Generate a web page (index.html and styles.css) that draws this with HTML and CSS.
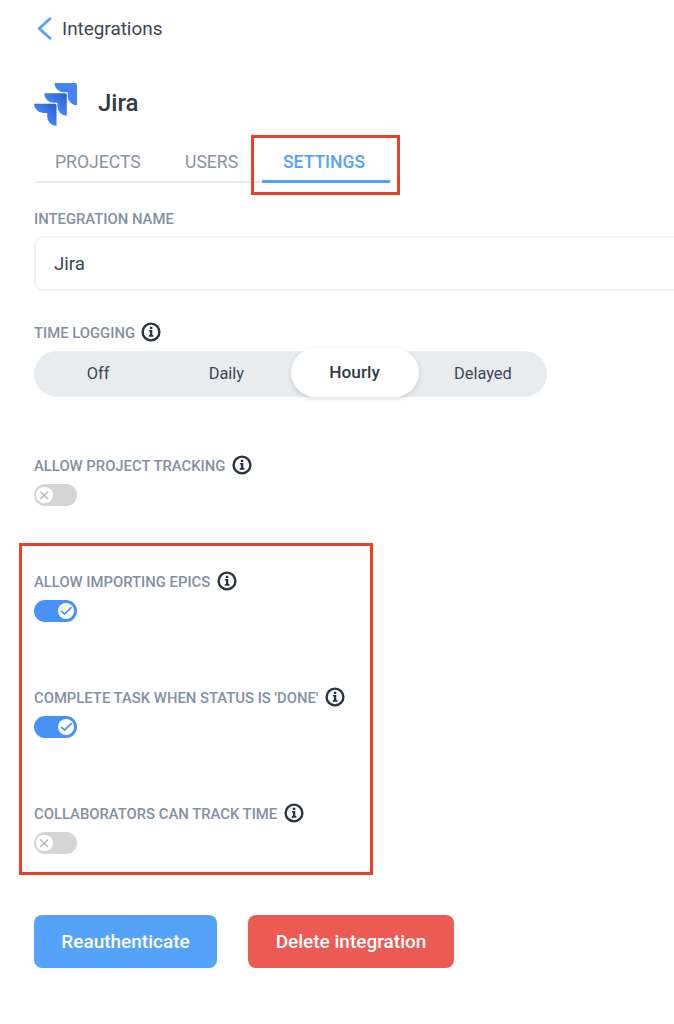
FILE: index.html
```html
<!DOCTYPE html>
<html lang="en">
<head>
<meta charset="utf-8">
<title>Jira integration settings</title>
<link rel="stylesheet" href="styles.css">
</head>
<body>
<svg class="defs" aria-hidden="true">
  <symbol id="info" viewBox="0 0 20 20">
    <circle cx="10" cy="10" r="8.4" fill="none" stroke="#2b333f" stroke-width="2.4"/>
    <path d="M8.8 4.8h2.5v2.1H8.8zM7.9 8.1h3.4v5h1.1v1.6H7.8v-1.6h1.1V9.6h-1z" fill="#2b333f"/>
  </symbol>
</svg>
<main class="page">
  <a class="back">
    <svg class="chevron" viewBox="0 0 15 24"><path d="M13 1.7 2.2 11.5 13 21.3" fill="none" stroke="#54a3f8" stroke-width="2.8" stroke-linecap="round" stroke-linejoin="round"/></svg>
    <span class="back-text">Integrations</span>
  </a>
  <header class="heading">
    <svg class="logo" viewBox="0 0 24 24">
      <defs>
        <linearGradient id="g1" x1="0.95" y1="0.05" x2="0.45" y2="0.6"><stop offset="0.1" stop-color="#2d62d2"/><stop offset="1" stop-color="#4284fb"/></linearGradient>
      </defs>
      <path fill="#4284fb" d="M23.013 0H11.455a5.215 5.215 0 0 0 5.215 5.215h2.129v2.057A5.215 5.215 0 0 0 24 12.483V1.005A1.001 1.001 0 0 0 23.013 0z"/>
      <path fill="url(#g1)" d="M17.294 5.757H5.736a5.215 5.215 0 0 0 5.215 5.214h2.129v2.058a5.218 5.218 0 0 0 5.215 5.214V6.758a1.001 1.001 0 0 0-1.001-1.001z"/>
      <path fill="url(#g1)" d="M11.571 11.513H0a5.218 5.218 0 0 0 5.232 5.215h2.13v2.057A5.215 5.215 0 0 0 12.575 24V12.518a1.005 1.005 0 0 0-1.004-1.005z"/>
    </svg>
    <h1 class="title">Jira</h1>
  </header>
  <nav class="tabs">
    <a class="tab projects">PROJECTS</a>
    <a class="tab users">USERS</a>
    <a class="tab active">SETTINGS</a>
    <span class="mark mark-tab"></span>
  </nav>
  <section class="name">
    <div class="label"><span>INTEGRATION NAME</span></div>
    <div class="input"><span>Jira</span></div>
  </section>
  <section class="logging">
    <div class="label"><span>TIME LOGGING</span><svg class="info"><use href="#info"/></svg></div>
    <div class="segments">
      <span class="segment">Off</span>
      <span class="segment">Daily</span>
      <span class="segment selected">Hourly</span>
      <span class="segment">Delayed</span>
    </div>
  </section>
  <section class="option">
    <div class="label"><span>ALLOW PROJECT TRACKING</span><svg class="info"><use href="#info"/></svg></div>
    <div class="toggle"><span class="knob"><svg viewBox="0 0 16 16"><path d="m4.3 4.3 7.4 7.4m0-7.4-7.4 7.4" stroke="#b4b6ba" stroke-width="1.4" fill="none"/></svg></span></div>
  </section>
  <div class="group">
    <span class="mark mark-group"></span>
    <section class="option">
      <div class="label"><span>ALLOW IMPORTING EPICS</span><svg class="info"><use href="#info"/></svg></div>
      <div class="toggle on"><span class="knob"><svg viewBox="0 0 16 16"><path d="m3 7.6 3.4 3.2L13.2 4" stroke="#4891f7" stroke-width="1.6" fill="none"/></svg></span></div>
    </section>
    <section class="option">
      <div class="label"><span>COMPLETE TASK WHEN STATUS IS 'DONE'</span><svg class="info"><use href="#info"/></svg></div>
      <div class="toggle on"><span class="knob"><svg viewBox="0 0 16 16"><path d="m3 7.6 3.4 3.2L13.2 4" stroke="#4891f7" stroke-width="1.6" fill="none"/></svg></span></div>
    </section>
    <section class="option">
      <div class="label"><span>COLLABORATORS CAN TRACK TIME</span><svg class="info"><use href="#info"/></svg></div>
      <div class="toggle"><span class="knob"><svg viewBox="0 0 16 16"><path d="m4.3 4.3 7.4 7.4m0-7.4-7.4 7.4" stroke="#b4b6ba" stroke-width="1.4" fill="none"/></svg></span></div>
    </section>
  </div>
  <footer class="actions">
    <button class="button primary">Reauthenticate</button>
    <button class="button danger">Delete integration</button>
  </footer>
</main>
</body>
</html>
```
FILE: styles.css
```css
* { box-sizing: border-box; }
body { margin: 0; background: #fff; font-family: Roboto, "Liberation Sans", sans-serif; color: #3d4652; overflow: hidden; }
.defs { display: none; }
.page { height: 1024px; padding: 15px 0 0 34px; display: flex; flex-direction: column; }
.back { display: flex; align-items: center; height: 27px; padding-left: 3px; gap: 10px; font-size: 18.9px; }
.chevron { width: 15px; height: 24px; }
.heading { display: flex; align-items: center; height: 43px; margin-top: 41px; gap: 21px; }
.logo { width: 43px; height: 43px; }
.title { margin: 0; padding-bottom: 3px; font-size: 24px; font-weight: 500; line-height: 28px; color: #323b47; }
.tabs { position: relative; display: flex; width: 356px; height: 42px; margin-top: 15px; border-bottom: 2px solid #e8eff4; font-size: 17.6px; line-height: 42px; color: #8892a5; }
.tab { flex: none; }
.projects { margin-left: 21px; width: 130px; }
.users { width: 77px; }
.active { width: 128px; height: 42px; padding-left: 21px; color: #54a3f8; font-size: 17.5px; font-weight: 500; border-bottom: 3px solid #54a3f8; }
.mark { position: absolute; border: 3px solid #ea4228; }
.mark-tab { left: 217px; top: -6px; width: 149px; height: 60px; }
.label { display: flex; align-items: center; height: 20px; gap: 6.3px; font-size: 14.84px; font-weight: 500; color: #8390a4; white-space: nowrap; }
.info { width: 20px; height: 20px; position: relative; top: -1px; }
.name { margin-top: 26px; }
.input { display: flex; align-items: center; height: 55px; width: 670px; margin-top: 7px; padding-left: 18px; border: 2px solid #f2f3f6; border-radius: 9px; font-size: 18.7px; }
.logging { margin-top: 32px; }
.segments { display: grid; grid-template-columns: repeat(4, 1fr); align-items: center; width: 513px; height: 46px; margin-top: 8px; border-radius: 23px; background: #e8ecef; font-size: 16.4px; text-align: center; }
.segment { line-height: 44px; padding-bottom: 1px; }
.selected { height: 49px; margin-top: -3px; padding: 0; line-height: 49px; border-radius: 24.5px; background: #fff; box-shadow: 0 2px 5px rgba(40, 50, 60, .16); font-weight: 500; font-size: 17.3px; color: #333c48; }
.option { height: 116px; }
.logging + .option { margin-top: 59px; }
.toggle { display: flex; align-items: center; width: 43px; height: 22px; margin-top: 8px; padding: 0 3px 0 2px; border-radius: 11px; background: #d3d5d7; }
.toggle.on { justify-content: flex-end; background: #4891f7; }
.knob { width: 16.5px; height: 16.5px; border-radius: 50%; background: #fff; }
.knob svg { display: block; width: 16.5px; height: 16.5px; }
.group { position: relative; }
.mark-group { left: -15px; top: -29px; width: 354px; height: 332px; }
.actions { display: flex; gap: 31px; margin-top: -5px; }
.button { height: 53px; padding: 0; border: 0; border-radius: 8px; color: #fff; font-family: inherit; font-size: 19px; font-weight: 500; }
.primary { width: 183px; background: #54a3f8; }
.danger { width: 206px; background: #eb5b53; }
```
